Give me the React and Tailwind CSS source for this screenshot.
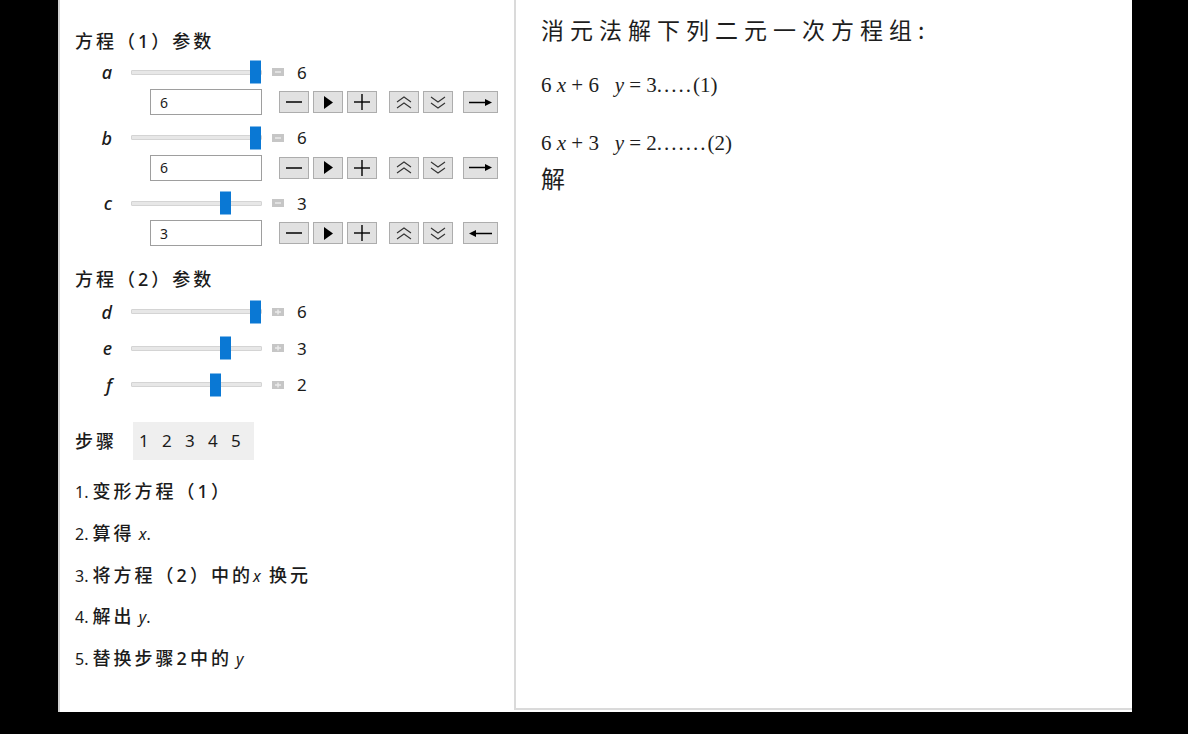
import React from "react"

const eq1Params = [
  { name: "a", value: 6, arrow: "right" },
  { name: "b", value: 6, arrow: "right" },
  { name: "c", value: 3, arrow: "left" },
]

const eq2Params = [
  { name: "d", value: 6 },
  { name: "e", value: 3 },
  { name: "f", value: 2 },
]

// CJK text in the reference runs wide and heavy
const Zh = ({ children, className = "" }) => (
  <span className={`text-[18px] font-medium tracking-[3px] ${className}`}>{children}</span>
)

const ToggleIcon = ({ open }) => (
  <svg width="12" height="8" viewBox="0 0 12 8" className="shrink-0">
    <rect x="0" y="0" width="12" height="8" fill="#c6c6c6" />
    <line x1="3" y1="4" x2="9" y2="4" stroke="#ececec" strokeWidth="1.4" />
    {!open && <line x1="6" y1="1.5" x2="6" y2="6.5" stroke="#ececec" strokeWidth="1.4" />}
  </svg>
)

const SliderRow = ({ name, value, open }) => (
  <div className="flex h-[26px] items-center">
    <span className="w-[39px] pr-[2px] text-right text-[18px] font-medium italic leading-none">{name}</span>
    <div className="relative ml-[17px] h-[5px] w-[131px] rounded-[1px] border border-[#d4d4d4] bg-[#e7e7e7]">
      <div
        className="absolute top-1/2 h-[23px] w-[11px] -translate-y-1/2 bg-[#0a78d4]"
        style={{ left: 59 + value * 10 - 1 }}
      />
    </div>
    <span className="ml-[10px]">
      <ToggleIcon open={open} />
    </span>
    <span className="ml-[13px] text-[17px] leading-none">{value}</span>
  </div>
)

const Btn = ({ children, w = "w-[30px]", className = "" }) => (
  <button className={`flex h-[22px] ${w} items-center justify-center border border-[#adadad] bg-[#e1e1e1] ${className}`}>
    {children}
  </button>
)

const ParamBlock = ({ name, value, arrow }) => (
  <div>
    <SliderRow name={name} value={value} open />
    <div className="mt-[4px] flex h-[26px] items-center">
      <div className="ml-[75px] flex h-[26px] w-[112px] items-center border border-[#9e9e9e] bg-white pl-[9px] text-[14px]">
        {value}
      </div>
      <div className="ml-[17px] flex items-center">
        <Btn>
          <svg width="16" height="4"><line x1="0" y1="2" x2="16" y2="2" stroke="#000" strokeWidth="1.5" /></svg>
        </Btn>
        <Btn className="ml-[4px]">
          <svg width="9" height="13"><polygon points="0,0 9,6.5 0,13" fill="#000" /></svg>
        </Btn>
        <Btn className="ml-[4px]">
          <svg width="16" height="16">
            <line x1="0" y1="8" x2="16" y2="8" stroke="#000" strokeWidth="1.4" />
            <line x1="8" y1="0" x2="8" y2="16" stroke="#000" strokeWidth="1.4" />
          </svg>
        </Btn>
        <Btn className="ml-[12px]">
          <svg width="16" height="13" fill="none" stroke="#333" strokeWidth="1.1">
            <path d="M1 6 L8 1 L15 6" />
            <path d="M1 12 L8 7 L15 12" />
          </svg>
        </Btn>
        <Btn className="ml-[4px]">
          <svg width="16" height="13" fill="none" stroke="#333" strokeWidth="1.1">
            <path d="M1 1 L8 6 L15 1" />
            <path d="M1 7 L8 12 L15 7" />
          </svg>
        </Btn>
        <Btn w="w-[35px]" className="ml-[10px]">
          {arrow === "right" ? (
            <svg width="23" height="9">
              <line x1="0" y1="4.5" x2="17" y2="4.5" stroke="#000" strokeWidth="1.5" />
              <polygon points="16,1 23,4.5 16,8" fill="#000" />
            </svg>
          ) : (
            <svg width="23" height="9">
              <line x1="6" y1="4.5" x2="23" y2="4.5" stroke="#000" strokeWidth="1.5" />
              <polygon points="7,1 0,4.5 7,8" fill="#000" />
            </svg>
          )}
        </Btn>
      </div>
    </div>
  </div>
)

const Heading = ({ children, className = "" }) => (
  <div className={`h-[24px] leading-[24px] ${className}`}>
    <Zh>{children}</Zh>
  </div>
)

const steps = [
  <>1. <Zh>变形方程（1）</Zh></>,
  <>2. <Zh>算得</Zh> <i>x</i>.</>,
  <>3. <Zh>将方程（2）中的</Zh><i>x</i>{"  "}<Zh>换元</Zh></>,
  <>4. <Zh>解出</Zh> <i>y</i>.</>,
  <>5. <Zh>替换步骤2中的</Zh> <i>y</i></>,
]

const Equation = ({ a, b, c, dots, n, className = "" }) => (
  <div className={`h-[30px] font-['Liberation_Serif',serif] text-[21px] leading-[30px] text-[#1e1e1e] ${className}`}>
    {a} <i>x</i> + {b}&nbsp;&nbsp; <i>y</i> = {c}
    <span className="tracking-[2px]">{".".repeat(dots)}</span>({n})
  </div>
)

export default function App() {
  return (
    <div className="h-[734px] w-[1188px] overflow-hidden bg-black font-['Noto_Sans','Noto_Sans_CJK_SC',sans-serif] text-[#1b1b1b]">
      <div className="ml-[58px] flex h-[712px] w-[1074px] border-l-2 border-[#d2d2d2] bg-white">
        {/* controls */}
        <div className="w-[454px] shrink-0 pl-[15px] pt-[29px]">
          <Heading>方程（1）参数</Heading>
          <div className="mt-[6px] flex flex-col gap-[9.5px]">
            {eq1Params.map((p) => (
              <ParamBlock key={p.name} {...p} />
            ))}
          </div>

          <Heading className="mt-[21px]">方程（2）参数</Heading>
          <div className="mt-[7.5px] flex flex-col gap-[10.5px]">
            {eq2Params.map((p) => (
              <SliderRow key={p.name} name={p.name} value={p.value} />
            ))}
          </div>

          <div className="mt-[24.5px] flex h-[38px] items-center">
            <Zh>步骤</Zh>
            <div className="ml-[16px] flex h-[38px] w-[121px] items-center bg-[#efefef] pl-[6px] text-[17px]">
              {[1, 2, 3, 4, 5].map((n) => (
                <span key={n} className="w-[24.5px]">{n}</span>
              ))}
            </div>
          </div>

          <ol className="mt-[11px]">
            {steps.map((s, i) => (
              <li key={i} className="h-[41.8px] whitespace-pre text-[16px] leading-[41.8px]">
                {s}
              </li>
            ))}
          </ol>
        </div>

        {/* output */}
        <div className="h-[710px] flex-1 border-b-2 border-l-2 border-[#dadada] pl-[25px] pt-[14px]">
          <div className="h-[30px] font-['Noto_Sans_CJK_SC',sans-serif] text-[23px] leading-[30px] tracking-[6px] text-[#1e1e1e]">
            消元法解下列二元一次方程组:
          </div>
          <Equation a={6} b={6} c={3} dots={5} n={1} className="mt-[26px]" />
          <Equation a={6} b={3} c={2} dots={7} n={2} className="mt-[27.5px]" />
          <div className="mt-[5.5px] h-[30px] font-['Noto_Sans_CJK_SC',sans-serif] text-[24px] leading-[30px] text-[#1e1e1e]">
            解
          </div>
        </div>
      </div>
    </div>
  )
}
